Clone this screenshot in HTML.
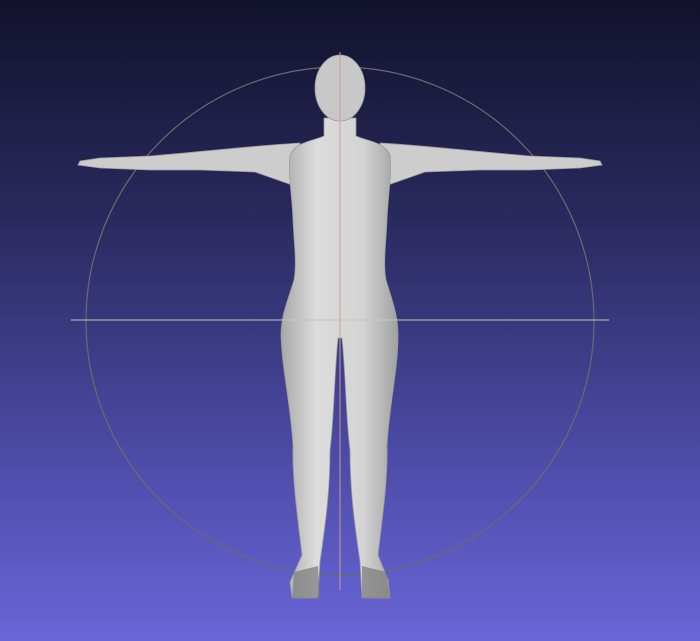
<!DOCTYPE html>
<html><head><style>html,body{margin:0;padding:0;width:700px;height:641px;overflow:hidden}</style></head>
<body>
<svg width="700" height="641" xmlns="http://www.w3.org/2000/svg">
<defs>
<linearGradient id="bg" x1="0" y1="0" x2="0" y2="1">
<stop offset="0" stop-color="#11122c"/>
<stop offset="0.35" stop-color="#2b2a60"/>
<stop offset="0.7" stop-color="#4b4aa4"/>
<stop offset="1" stop-color="#6966d8"/>
</linearGradient>
<linearGradient id="bd" x1="0" y1="0" x2="1" y2="0">
<stop offset="0" stop-color="#a8a8a8"/>
<stop offset="0.3" stop-color="#dcdcdc"/>
<stop offset="0.7" stop-color="#d4d4d4"/>
<stop offset="1" stop-color="#a0a0a0"/>
</linearGradient>
</defs>
<rect width="700" height="641" fill="url(#bg)"/>
<ellipse cx="340" cy="321" rx="254" ry="254" fill="none" stroke="#6a6a70" stroke-width="1.2"/>
<g fill="#cdcdcd" stroke="#9a9a9a" stroke-width="0.8">
<path d="M300,143 C250,146 200,152 150,156 L100,158 L80,161 L78,165 L100,168 L150,170 L200,170 L255,172 L292,185 Z"/>
<path d="M380,143 C430,146 480,152 530,156 L580,158 L600,161 L602,165 L580,168 L530,170 L480,170 L425,172 L388,185 Z"/>
<path d="M324,118 L324,136 C310,142 296,142 290,155 C288,175 292,195 293,220 C294,245 297,262 294,280 C288,300 281,315 281,335 C282,370 290,400 293,445 C292,480 298,520 302,555 L290,582 L292,598 L318,598 L320,562 C326,520 330,490 330,450 C334,420 334,380 338,338 L342,338 C346,380 346,420 350,450 C350,490 354,520 360,562 L362,598 L390,598 L388,580 L378,555 C382,520 388,480 387,445 C390,400 398,370 398,335 C398,315 392,300 386,280 C383,262 386,245 387,220 C388,195 392,175 390,155 C384,142 370,142 356,136 L356,118 Z" fill="url(#bd)"/>
<ellipse cx="340" cy="88" rx="25" ry="33" fill="#c8c8c8"/>
</g>
<g fill="#7a7a7a" opacity="0.7">
<path d="M294,572 L318,566 L320,598 L292,598 Z"/>
<path d="M362,566 L386,572 L390,598 L362,598 Z"/>
</g>
<line x1="71" y1="320" x2="609" y2="320" stroke="#b0d4b0" stroke-width="1.2" opacity="0.8"/>
<line x1="340" y1="52" x2="340" y2="590" stroke="#d49a9a" stroke-width="1.2" opacity="0.8"/>
</svg>
</body></html>
